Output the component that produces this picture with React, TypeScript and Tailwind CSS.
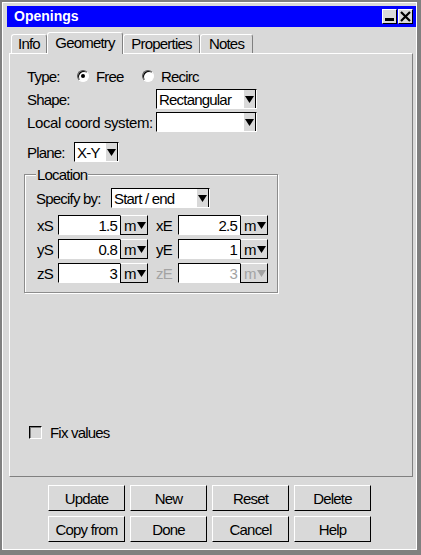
import React from 'react'

function Arrow({ disabled = false }: { disabled?: boolean }) {
  return (
    <svg width="9" height="7" viewBox="0 0 9 7">
      <polygon points="0,0 9,0 4.5,7" fill={disabled ? '#a3a3a3' : '#000'} />
    </svg>
  )
}

function Combo({ className, value }: { className: string; value: string }) {
  return (
    <div className={`flex h-[20px] border border-t-black border-l-black border-b-white border-r-white ${className}`}>
      <div className="flex-1 bg-white pl-[2px] flex items-center whitespace-nowrap overflow-hidden">{value}</div>
      <div className="w-[13px] flex items-center justify-center bg-[#d9d9d9] border-l border-r border-l-white border-r-black">
        <Arrow />
      </div>
    </div>
  )
}

function Radio({ checked = false }: { checked?: boolean }) {
  return (
    <div className="w-[12px] h-[12px] rounded-full border border-t-[#555] border-l-[#555] border-b-white border-r-white bg-white shadow-[inset_1px_1px_0_#000] flex items-center justify-center">
      {checked && <div className="w-[4px] h-[4px] rounded-full bg-black" />}
    </div>
  )
}

function Field({ value, disabled = false }: { value: string; disabled?: boolean }) {
  return (
    <div
      className={`w-[62px] h-[20px] bg-white border-t border-l border-b border-t-black border-l-black border-b-white flex items-center justify-end pr-[3px] ${
        disabled ? 'text-[#a3a3a3]' : ''
      }`}
    >
      {value}
    </div>
  )
}

function Unit({ disabled = false }: { disabled?: boolean }) {
  return (
    <div className="w-[28px] h-[20px] flex items-center bg-[#d9d9d9] border border-t-white border-l-black border-r-black border-b-black pl-[3px]">
      <span className={disabled ? 'text-[#a3a3a3]' : ''}>m</span>
      <span className="ml-auto mr-[1px] flex">
        <Arrow disabled={disabled} />
      </span>
    </div>
  )
}

function CoordRow({ a, av, b, bv, bDisabled = false }: { a: string; av: string; b: string; bv: string; bDisabled?: boolean }) {
  return (
    <div className="h-[20px] flex items-center">
      <span className="w-[17px] text-right">{a}</span>
      <div className="ml-[5px] flex">
        <Field value={av} />
        <Unit />
      </div>
      <span className={`w-[24px] text-right ${bDisabled ? 'text-[#a3a3a3]' : ''}`}>{b}</span>
      <div className="ml-[6px] flex">
        <Field value={bv} disabled={bDisabled} />
        <Unit disabled={bDisabled} />
      </div>
    </div>
  )
}

function Tab({ label, className, active = false }: { label: string; className: string; active?: boolean }) {
  return (
    <div
      className={`flex justify-center items-end border-t border-l border-r border-t-white border-l-white border-r-[#808080] rounded-t-[3px] bg-[#d9d9d9] ${
        active ? 'relative h-[22px] mb-[-1px] pb-[3px]' : 'h-[19px] pb-[1px]'
      } ${className}`}
    >
      {label}
    </div>
  )
}

function Button({ label }: { label: string }) {
  return (
    <button className="h-[26px] bg-[#d9d9d9] border border-t-white border-l-white border-r-black border-b-black flex items-center justify-center">
      {label}
    </button>
  )
}

export default function App() {
  return (
    <div className="w-[421px] h-[555px] bg-[#808080] pl-[2px] pt-[2px] pr-[4px] pb-[5px] font-['Liberation_Sans',Arial,sans-serif] text-[15px] tracking-[-0.8px] leading-[17px] text-black select-none">
      <div className="h-full flex flex-col bg-[#d9d9d9] border border-white">
        {/* Title bar */}
        <div className="mt-[3px] ml-[4px] h-[21px] bg-[#0000ff] flex items-center pl-[7px] pr-[3px]">
          <span className="text-white font-bold text-[14px] tracking-normal">Openings</span>
          <div className="ml-auto flex gap-[1px]">
            <div className="w-[15px] h-[15px] bg-[#d9d9d9] border border-t-white border-l-white border-r-black border-b-black flex items-end justify-center pb-[2px]">
              <div className="w-[9px] h-[3px] bg-black" />
            </div>
            <div className="w-[15px] h-[15px] bg-[#d9d9d9] border border-t-white border-l-white border-r-black border-b-black flex items-center justify-center">
              <svg width="11" height="11" viewBox="0 0 11 11">
                <path d="M1 1 L10 10 M10 1 L1 10" stroke="#000" strokeWidth="2.2" />
              </svg>
            </div>
          </div>
        </div>

        {/* Tabs */}
        <div className="mt-[5px] h-[21px] pl-[8px] flex items-end">
          <Tab label="Info" className="w-[36px]" />
          <Tab label="Geometry" className="w-[76px]" active />
          <Tab label="Properties" className="w-[77px]" />
          <Tab label="Notes" className="w-[53px]" />
        </div>

        {/* Panel */}
        <div className="ml-[6px] mr-[3px] h-[424px] border border-t-white border-l-white border-r-[#808080] border-b-[#808080] pl-[14px] flex flex-col">
          <div className="mt-[12px] h-[20px] flex items-center">
            <span className="ml-[3px] w-[50px]">Type:</span>
            <Radio checked />
            <span className="ml-[7px] w-[46px]">Free</span>
            <Radio />
            <span className="ml-[7px]">Recirc</span>
          </div>

          <div className="mt-[3px] h-[20px] flex items-center">
            <span className="ml-[3px] w-[129px]">Shape:</span>
            <Combo className="w-[101px]" value="Rectangular" />
          </div>

          <div className="mt-[3px] h-[20px] flex items-center">
            <span className="ml-[3px] w-[129px] tracking-[-0.4px]">Local coord system:</span>
            <Combo className="w-[101px]" value="" />
          </div>

          <div className="mt-[10px] h-[20px] flex items-center">
            <span className="ml-[3px] w-[47px]">Plane:</span>
            <Combo className="w-[45px]" value="X-Y" />
          </div>

          {/* Location group */}
          <div className="relative mt-[12px] w-[254px] h-[119px] border border-[#8c8c8c] shadow-[inset_1px_1px_0_#fff,1px_1px_0_#fff] pl-[11px] flex flex-col">
            <span className="absolute left-[11px] top-[-9px] px-[1px] bg-[#d9d9d9]">Location</span>
            <div className="mt-[13px] h-[20px] flex items-center">
              <span className="w-[75px]">Specify by:</span>
              <Combo className="w-[99px]" value="Start / end" />
            </div>
            <div className="mt-[7px] flex flex-col gap-[4px]">
              <CoordRow a="xS" av="1.5" b="xE" bv="2.5" />
              <CoordRow a="yS" av="0.8" b="yE" bv="1" />
              <CoordRow a="zS" av="3" b="zE" bv="3" bDisabled />
            </div>
          </div>

          <div className="mt-[129px] h-[20px] flex items-center">
            <div className="ml-[5px] w-[13px] h-[13px] border border-t-black border-l-black border-b-white border-r-white shadow-[inset_1px_1px_0_#808080]" />
            <span className="ml-[8px]">Fix values</span>
          </div>
        </div>

        {/* Buttons */}
        <div className="mt-[8px] ml-[45px] grid grid-cols-[repeat(4,77px)] gap-[5px]">
          <Button label="Update" />
          <Button label="New" />
          <Button label="Reset" />
          <Button label="Delete" />
          <Button label="Copy from" />
          <Button label="Done" />
          <Button label="Cancel" />
          <Button label="Help" />
        </div>
      </div>
    </div>
  )
}
